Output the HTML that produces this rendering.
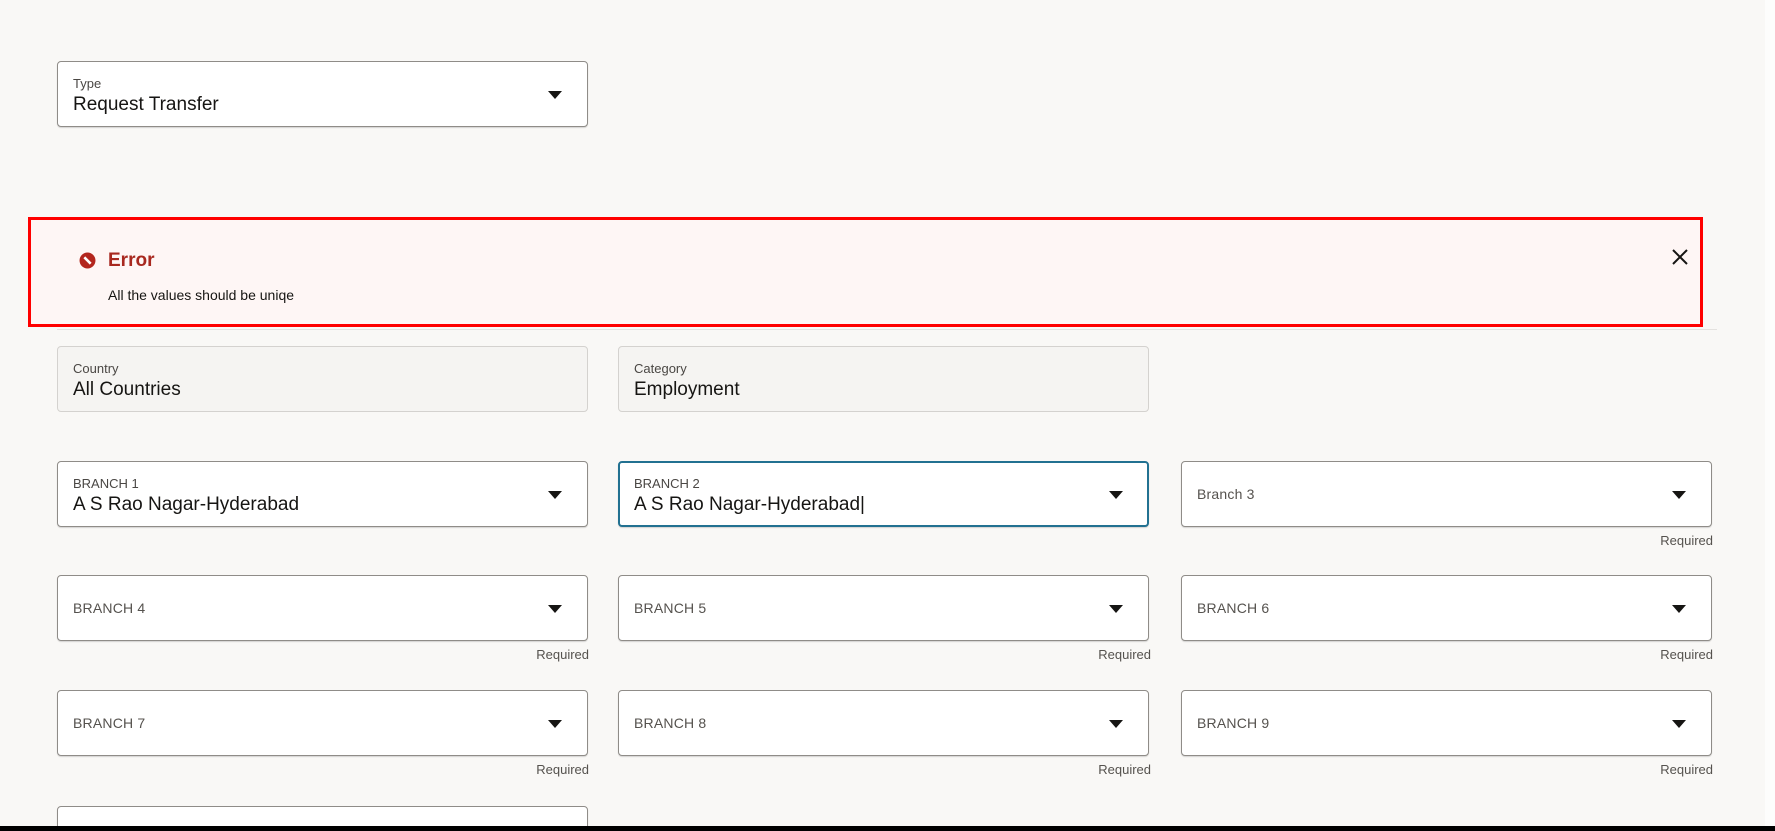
<!DOCTYPE html>
<html style="overflow:hidden;height:831px"><head><meta charset="utf-8"><style>
*{box-sizing:border-box;margin:0;padding:0}
body{width:1775px;height:831px;overflow:hidden;background:#f9f8f6;font-family:"Liberation Sans",sans-serif;position:relative;color:#161513}
.f{position:absolute;width:531px;height:66px;background:#fff;border:1px solid #8f8c88;border-radius:4px;box-shadow:0 1px 1px rgba(0,0,0,.15)}
.f .l{position:absolute;left:15px;top:14px;font-size:13px;color:#4a4744}
.f .v{position:absolute;left:15px;top:32px;font-size:19px;color:#161513}
.f .p{position:absolute;left:15px;top:24px;font-size:14px;color:#55524e;letter-spacing:.2px}
.f .a{position:absolute;right:25px;top:29px;width:0;height:0;border-left:7px solid transparent;border-right:7px solid transparent;border-top:8px solid #161513}
.ro{background:#f5f4f2;border-color:#d4d2cf;box-shadow:none}
.req{position:absolute;font-size:13px;color:#55524e;width:80px;text-align:right}
</style></head><body>
<div class="f" style="left:57px;top:61px"><div class="l">Type</div><div class="v">Request Transfer</div><div class="a"></div></div>

<div style="position:absolute;left:28px;top:217px;width:1675px;height:110px;border:3px solid #ff0000;background:#fef6f5"></div>
<svg style="position:absolute;left:79px;top:252px" width="17" height="17" viewBox="0 0 16 16"><circle cx="8" cy="8" r="7.5" fill="#b3261e"/><path d="M5 5 L11 11" stroke="#fff" stroke-width="2.4"/></svg>
<div style="position:absolute;left:108px;top:250px;font-size:19px;font-weight:bold;color:#a8281f">Error</div>
<div style="position:absolute;left:108px;top:287px;font-size:14px;color:#161513">All the values should be uniqe</div>
<svg style="position:absolute;left:1671px;top:248px" width="18" height="18" viewBox="0 0 18 18"><path d="M2 2L16 16M16 2L2 16" stroke="#161513" stroke-width="2"/></svg>
<div style="position:absolute;left:57px;top:329px;width:1660px;height:1px;background:#e4e2df"></div>

<div class="f ro" style="left:57px;top:346px"><div class="l">Country</div><div class="v">All Countries</div></div>
<div class="f ro" style="left:618px;top:346px"><div class="l">Category</div><div class="v">Employment</div></div>

<div class="f" style="left:57px;top:461px"><div class="l">BRANCH 1</div><div class="v">A S Rao Nagar-Hyderabad</div><div class="a"></div></div>
<div class="f" style="left:618px;top:461px;border:2px solid #227191"><div class="l" style="left:14px;top:13px">BRANCH 2</div><div class="v" style="left:14px;top:31px">A S Rao Nagar-Hyderabad|</div><div class="a" style="right:24px;top:28px"></div></div>
<div class="f" style="left:1181px;top:461px"><div class="p">Branch 3</div><div class="a"></div></div>
<div class="req" style="left:1633px;top:533px">Required</div>

<div class="f" style="left:57px;top:575px"><div class="p">BRANCH 4</div><div class="a"></div></div>
<div class="f" style="left:618px;top:575px"><div class="p">BRANCH 5</div><div class="a"></div></div>
<div class="f" style="left:1181px;top:575px"><div class="p">BRANCH 6</div><div class="a"></div></div>
<div class="req" style="left:509px;top:647px">Required</div>
<div class="req" style="left:1071px;top:647px">Required</div>
<div class="req" style="left:1633px;top:647px">Required</div>

<div class="f" style="left:57px;top:690px"><div class="p">BRANCH 7</div><div class="a"></div></div>
<div class="f" style="left:618px;top:690px"><div class="p">BRANCH 8</div><div class="a"></div></div>
<div class="f" style="left:1181px;top:690px"><div class="p">BRANCH 9</div><div class="a"></div></div>
<div class="req" style="left:509px;top:762px">Required</div>
<div class="req" style="left:1071px;top:762px">Required</div>
<div class="req" style="left:1633px;top:762px">Required</div>

<div class="f" style="left:57px;top:806px;height:25px"></div>
<div style="position:absolute;left:1765px;top:0;width:10px;height:826px;background:#fdfdfc"></div>
<div style="position:absolute;left:0;top:826px;width:1775px;height:5px;background:#000"></div>
</body></html>
